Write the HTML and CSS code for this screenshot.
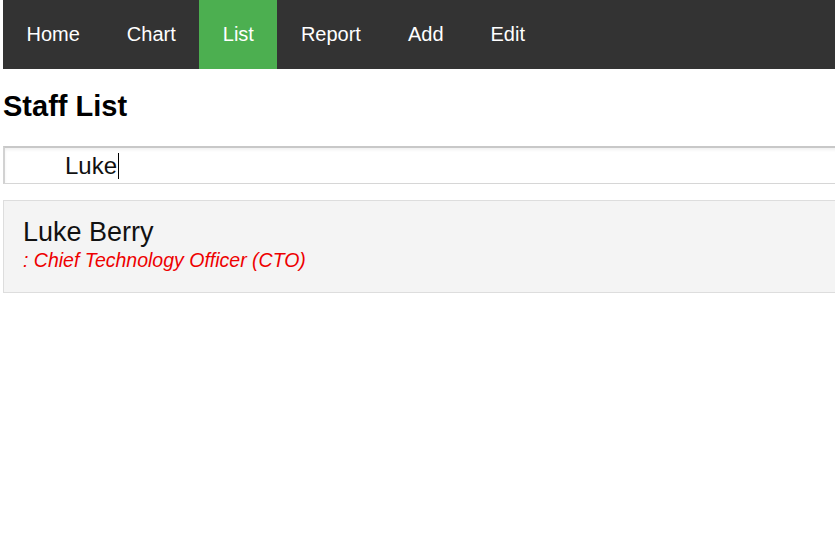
FILE: index.html
```html
<!DOCTYPE html>
<html lang="en">
<head>
<meta charset="utf-8">
<title>Staff List</title>
<link rel="stylesheet" href="styles.css">
</head>
<body>
<div class="page">
  <nav class="topnav">
    <a class="nav-item" href="#">Home</a>
    <a class="nav-item" href="#">Chart</a>
    <a class="nav-item active" href="#">List</a>
    <a class="nav-item" href="#">Report</a>
    <a class="nav-item" href="#">Add</a>
    <a class="nav-item" href="#">Edit</a>
  </nav>
  <h1 class="title">Staff List</h1>
  <div class="search" role="searchbox"><span class="search-text">Luke</span><span class="caret"></span></div>
  <div class="result">
    <span class="result-name">Luke Berry</span>
    <span class="result-role">: Chief Technology Officer (CTO)</span>
  </div>
</div>
</body>
</html>
```
FILE: styles.css
```css
html, body {
  margin: 0;
  padding: 0;
  background: #fff;
}
body {
  font-family: "Liberation Sans", Arial, sans-serif;
  overflow: hidden;
}
.page {
  margin-left: 3px;
  width: 870px;
}
.topnav {
  display: flex;
  background: #333333;
  height: 69px;
}
.nav-item {
  display: block;
  padding: 0 23.5px;
  line-height: 69px;
  font-size: 20px;
  color: #ffffff;
  text-decoration: none;
}
.nav-item.active {
  background: #4caf50;
}
.title {
  margin: 21px 0 24px 0;
  font-size: 29px;
  font-weight: bold;
  line-height: 32px;
  color: #000;
}
.search {
  display: flex;
  align-items: center;
  box-sizing: border-box;
  width: 100%;
  height: 38px;
  margin: 0 0 16px 0;
  padding: 0 0 0 60px;
  font-size: 24px;
  color: #111;
  border: 1px solid #d6d6d6;
  border-top: 2px solid #c8c8c8;
  border-left: 2px solid #d2d2d2;
  box-shadow: inset 0 2px 3px rgba(0, 0, 0, 0.06);
  background: #fff;
}
.search-text {
  line-height: 28px;
}
.caret {
  display: block;
  width: 1px;
  height: 26px;
  margin-left: 1px;
  background: #000;
}
.result {
  box-sizing: border-box;
  height: 93px;
  padding: 16px 19px 0 19px;
  background: #f4f4f4;
  border: 1px solid #dddddd;
}
.result-name {
  display: block;
  font-size: 27px;
  line-height: 31px;
  color: #111;
}
.result-role {
  display: block;
  margin-top: 2px;
  font-size: 19.5px;
  line-height: 20px;
  font-style: italic;
  color: #ee0000;
}
```
